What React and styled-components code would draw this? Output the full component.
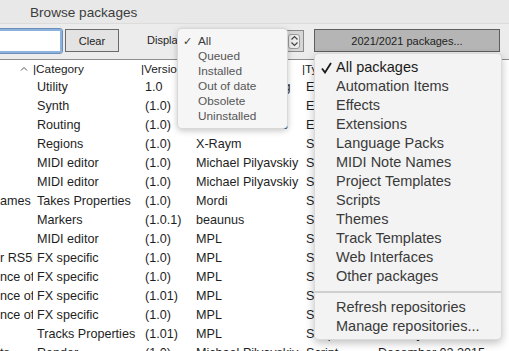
import styled, { createGlobalStyle } from "styled-components";

const GlobalStyle = createGlobalStyle`
  html, body {
    margin: 0;
    padding: 0;
    background: #ececec;
    font-family: "Liberation Sans", Arial, sans-serif;
  }
`;

const rows = [
  ["", "Utility", "1.0", "Tale, Justin Lang", "Effect", "January 04 2016"],
  ["", "Synth", "(1.0)", "Tale", "Effect", "January 04 2016"],
  ["", "Routing", "(1.0)", "Michael Pollmes", "Effect", "January 04 2016"],
  ["", "Regions", "(1.0)", "X-Raym", "Script", "January 04 2016"],
  ["", "MIDI editor", "(1.0)", "Michael Pilyavskiy", "Script", "January 04 2016"],
  ["", "MIDI editor", "(1.0)", "Michael Pilyavskiy", "Script", "January 04 2016"],
  ["ames (takes", "Takes Properties", "(1.0)", "Mordi", "Script", "January 04 2016"],
  ["", "Markers", "(1.0.1)", "beaunus", "Script", "January 04 2016"],
  ["", "MIDI editor", "(1.0)", "MPL", "Script", "January 04 2016"],
  ["r RS5k inst", "FX specific", "(1.0)", "MPL", "Script", "January 04 2016"],
  ["nce of", "FX specific", "(1.0)", "MPL", "Script", "January 04 2016"],
  ["nce of", "FX specific", "(1.01)", "MPL", "Script", "January 04 2016"],
  ["nce of", "FX specific", "(1.0)", "MPL", "Script", "January 04 2016"],
  ["", "Tracks Properties", "(1.01)", "MPL", "Script", "January 04 2016"],
  ["ts", "Render", "(1.0)", "Michael Pilyavskiy", "Script", "December 02 2015"],
];

const displayOptions = ["All", "Queued", "Installed", "Out of date", "Obsolete", "Uninstalled"];

const packageTypes = [
  "All packages",
  "Automation Items",
  "Effects",
  "Extensions",
  "Language Packs",
  "MIDI Note Names",
  "Project Templates",
  "Scripts",
  "Themes",
  "Track Templates",
  "Web Interfaces",
  "Other packages",
];

export default function App() {
  return (
    <Window>
      <GlobalStyle />
      <TitleBar>Browse packages</TitleBar>
      <Toolbar>
        <SearchBox />
        <Button>Clear</Button>
        <Label>Display:</Label>
        <Select>
          <Stepper>
            <svg width="9" height="12" viewBox="0 0 9 12">
              <polyline points="1.5,4.5 4.5,1.5 7.5,4.5" fill="none" stroke="#444" strokeWidth="1.2" />
              <polyline points="1.5,7.5 4.5,10.5 7.5,7.5" fill="none" stroke="#444" strokeWidth="1.2" />
            </svg>
          </Stepper>
        </Select>
        <PackagesButton>2021/2021 packages...</PackagesButton>
      </Toolbar>

      <Table>
        <HeaderRow>
          <NameHead>
            <svg width="8" height="5" viewBox="0 0 8 5">
              <polyline points="1,4.5 4,1.5 7,4.5" fill="none" stroke="#555" strokeWidth="1" />
            </svg>
          </NameHead>
          <HeadCell>|Category</HeadCell>
          <HeadCell>|Version</HeadCell>
          <HeadCell>|Author</HeadCell>
          <HeadCell>|Type</HeadCell>
          <HeadCell>|Installed</HeadCell>
        </HeaderRow>
        {rows.map((r, i) => (
          <Row key={i}>
            <NameCell>{r[0]}</NameCell>
            <Cell>{r[1]}</Cell>
            <Cell>{r[2]}</Cell>
            <Cell>{r[3]}</Cell>
            <Cell>{r[4]}</Cell>
            <Cell>{r[5]}</Cell>
          </Row>
        ))}
      </Table>

      <DisplayPopup>
        {displayOptions.map((o, i) => (
          <PopupItem key={o} $active={i === 0}>
            {i === 0 && <SmallCheck>✓</SmallCheck>}
            {o}
          </PopupItem>
        ))}
      </DisplayPopup>

      <PackagesMenu>
        {packageTypes.map((t, i) => (
          <MenuItem key={t} $active={i === 0}>
            {i === 0 && (
              <Check width="11" height="12" viewBox="0 0 11 12">
                <polyline points="1,6.5 4,10.5 10,1" fill="none" stroke="#1a1a1a" strokeWidth="1.8" />
              </Check>
            )}
            {t}
          </MenuItem>
        ))}
        <Separator />
        <MenuItem>Refresh repositories</MenuItem>
        <MenuItem>Manage repositories...</MenuItem>
      </PackagesMenu>
    </Window>
  );
}

const Window = styled.div`
  position: relative;
  width: 509px;
  height: 351px;
  overflow: hidden;
  display: flex;
  flex-direction: column;
  background: #ececec;
`;

const TitleBar = styled.div`
  flex-shrink: 0;
  height: 24px;
  line-height: 25px;
  padding-left: 30px;
  font-size: 13.6px;
  color: #3c3c3c;
  background: #e8e8e8;
  border-bottom: 1px solid #dcdcdc;
  box-sizing: border-box;
`;

const Toolbar = styled.div`
  flex-shrink: 0;
  height: 35px;
  display: flex;
  align-items: flex-start;
  padding-top: 4px;
  box-sizing: border-box;
`;

const SearchBox = styled.div`
  box-sizing: border-box;
  width: 75px;
  height: 26px;
  margin-left: -12px;
  background: #fff;
  border: 1px solid #6b8fb8;
  box-shadow: inset 0 0 0 2px #8cb2de;
  border-radius: 3px;
`;

const Button = styled.div`
  box-sizing: border-box;
  width: 54px;
  height: 23px;
  margin: 1px 0 0 2px;
  background: #e3e3e3;
  border: 1px solid #6a6a6a;
  font-size: 11px;
  color: #222;
  display: flex;
  align-items: center;
  justify-content: center;
`;

const Label = styled.div`
  width: 34px;
  margin: 1px 0 0 28px;
  line-height: 23px;
  font-size: 11px;
  color: #222;
  white-space: nowrap;
`;

const Select = styled.div`
  box-sizing: border-box;
  width: 123px;
  height: 22px;
  margin-top: 2px;
  background: #d6d6d6;
  border: 1px solid #8a8a8a;
  display: flex;
  align-items: center;
  justify-content: flex-end;
  padding-right: 3px;
`;

const Stepper = styled.div`
  box-sizing: border-box;
  width: 12px;
  height: 15px;
  background: #ececec;
  border: 1px solid #9a9a9a;
  border-radius: 3px;
  display: flex;
  align-items: center;
  justify-content: center;
`;

const PackagesButton = styled.div`
  box-sizing: border-box;
  width: 186px;
  height: 23px;
  margin: 1px 0 0 10px;
  background: #b5b5b5;
  border: 1px solid #5e5e5e;
  font-size: 11px;
  color: #222;
  display: flex;
  align-items: center;
  justify-content: center;
`;

const Table = styled.div`
  flex: 1;
  min-height: 0;
  overflow: hidden;
  background: #fff;
  border-top: 1px solid #8c8c8c;
  display: flex;
  flex-direction: column;
`;

const columns = "33px 108px 51px 110px 72px 1fr";

const HeaderRow = styled.div`
  flex-shrink: 0;
  display: grid;
  grid-template-columns: ${columns};
  height: 17px;
  align-items: center;
  font-size: 11.8px;
  color: #222;
`;

const HeadCell = styled.div`
  white-space: nowrap;
  overflow: hidden;
`;

const NameHead = styled.div`
  display: flex;
  justify-content: flex-end;
  padding-right: 5px;
  svg {
    display: block;
  }
`;

const Row = styled.div`
  display: grid;
  grid-template-columns: ${columns};
  height: 19px;
  align-items: center;
  font-size: 12.6px;
  color: #1e1e1e;
  flex-shrink: 0;
`;

const Cell = styled.div`
  padding-left: 4px;
  white-space: nowrap;
  overflow: hidden;
`;

const NameCell = styled.div`
  white-space: nowrap;
  overflow: hidden;
`;

const DisplayPopup = styled.div`
  position: absolute;
  left: 177px;
  top: 28px;
  width: 111px;
  box-sizing: border-box;
  padding: 5px 0 4px;
  background: #f6f6f6;
  border: 1px solid rgba(0, 0, 0, 0.12);
  border-radius: 5px;
  box-shadow: 0 2px 6px rgba(0, 0, 0, 0.22);
`;

const PopupItem = styled.div`
  position: relative;
  height: 15px;
  line-height: 15px;
  padding-left: 20px;
  font-size: 11.8px;
  color: ${(p) => (p.$active ? "#3c3c3c" : "#555")};
`;

const SmallCheck = styled.span`
  position: absolute;
  left: 5px;
  top: 0;
  font-size: 11px;
  color: #3c3c3c;
`;

const PackagesMenu = styled.div`
  position: absolute;
  left: 314px;
  top: 53px;
  width: 188px;
  box-sizing: border-box;
  padding: 4px 0 3px;
  background: #f3f3f3;
  border: 1px solid rgba(0, 0, 0, 0.1);
  border-radius: 5px;
  box-shadow: 0 3px 8px rgba(0, 0, 0, 0.25);
`;

const MenuItem = styled.div`
  position: relative;
  height: 19px;
  line-height: 19px;
  padding-left: 21px;
  font-size: 14.5px;
  color: ${(p) => (p.$active ? "#1a1a1a" : "#3a3a3a")};
  white-space: nowrap;
`;

const Check = styled.svg`
  position: absolute;
  left: 6px;
  top: 4px;
`;

const Separator = styled.div`
  height: 2px;
  margin: 5px 0 5px;
  background: #cfcfcf;
`;
